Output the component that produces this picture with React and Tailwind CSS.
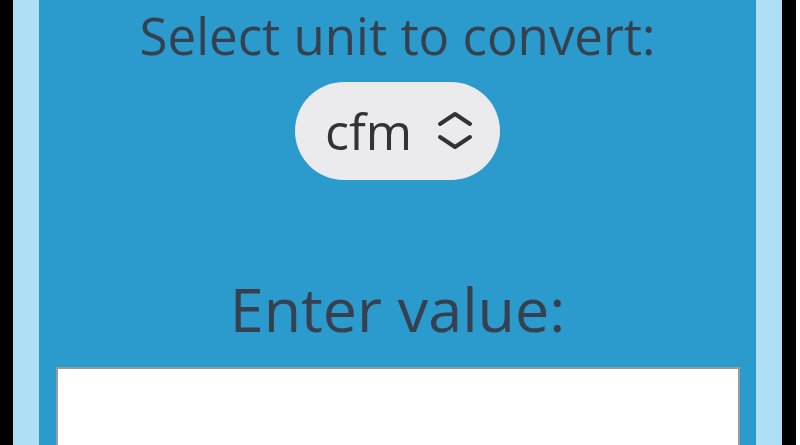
import React, { useState } from 'react'

const units = ['cfm', 'm³/h', 'l/s']

const Chevrons = () => (
    <svg width="38" height="40" viewBox="0 0 38 40" fill="none" stroke="#333" strokeWidth="4" strokeLinecap="round" strokeLinejoin="round">
        <polyline points="4,13 19,3 34,13" />
        <polyline points="4,26 19,36 34,26" />
    </svg>
)

const App = () => {
    const [unit, setUnit] = useState(units[0]);
    const [value, setValue] = useState('');

    return (
        <div className="flex h-[445px] w-[800px] overflow-hidden bg-black" style={{ fontFamily: '"Open Sans", "Noto Sans", sans-serif' }}>
            <div className="w-[13px] shrink-0 bg-black" />
            <div className="w-[26px] shrink-0 bg-[#aedff5]" />
            <div className="flex w-[717px] shrink-0 flex-col items-center bg-[#2a9bcc] pt-[10px] text-[#36404e]">
                <h2 className="shrink-0 text-[51px] leading-[51px]">Select unit to convert:</h2>
                <label className="relative mt-[21px] flex h-[98px] shrink-0 items-center rounded-full bg-[#ebebee] pl-[30px] pr-[26px]">
                    <span className="text-[50px] leading-[50px] text-[#333]">{unit}</span>
                    <span className="ml-[24px] flex">
                        <Chevrons />
                    </span>
                    <select
                        value={unit}
                        onChange={(e) => setUnit(e.target.value)}
                        className="absolute inset-0 cursor-pointer opacity-0"
                    >
                        {units.map((u) => (
                            <option key={u} value={u}>{u}</option>
                        ))}
                    </select>
                </label>
                <h2 className="mt-[98px] shrink-0 text-[61px] leading-[61px]">Enter value:</h2>
                <input
                    type="text"
                    value={value}
                    onChange={(e) => setValue(e.target.value)}
                    className="mt-[28px] h-[120px] w-[684px] shrink-0 border-2 border-[#9a9a9a] bg-white px-3 text-[40px] outline-none"
                />
            </div>
            <div className="w-[26px] shrink-0 bg-[#aedff5]" />
            <div className="w-[14px] shrink-0 bg-black" />
            <div className="flex-1 bg-white" />
        </div>
    )
}

export default App;
